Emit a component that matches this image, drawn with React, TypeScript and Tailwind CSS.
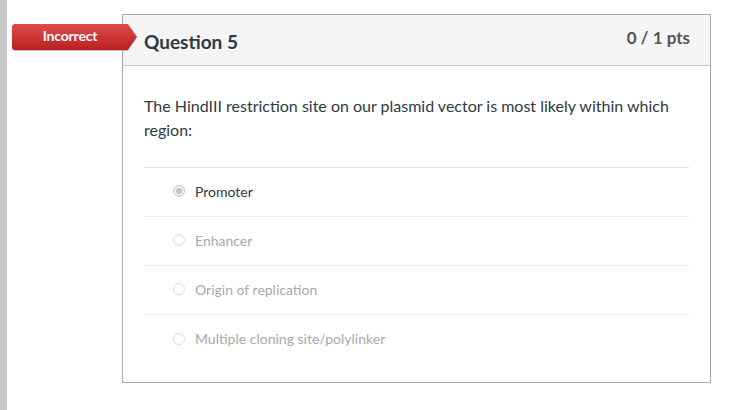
const options = [
  { label: "Promoter", selected: true },
  { label: "Enhancer", selected: false },
  { label: "Origin of replication", selected: false },
  { label: "Multiple cloning site/polylinker", selected: false },
];

const Radio = ({ selected }: { selected: boolean }) => (
  <span
    className={
      "w-[12px] h-[12px] rounded-full border flex items-center justify-center shrink-0 " +
      (selected ? "border-[#c4c4c4] bg-[#f3f3f3]" : "border-[#dedede] bg-white")
    }
  >
    {selected && <span className="w-[6px] h-[6px] rounded-full bg-[#c2c2c2]" />}
  </span>
);

export default function App() {
  return (
    <div className="w-[729px] h-[410px] bg-white flex overflow-hidden" style={{ fontFamily: "Lato, 'Open Sans', sans-serif" }}>
      {/* left rail */}
      <div className="w-[7px] h-full bg-[#c8c8c8] shrink-0" />

      <div className="relative flex-1 pl-[115px] pt-[14px]">
        {/* Incorrect badge */}
        <div className="absolute left-[5px] top-[24px] flex items-center">
          <div className="w-[116px] h-[26px] rounded-l-[3px] bg-gradient-to-b from-[#e24a4a] to-[#b62020] flex items-center justify-center pb-[3px] shadow-[0_1px_1px_rgba(0,0,0,0.25)]">
            <span className="text-white text-[14px] leading-[18px] font-bold tracking-[-0.2px]">Incorrect</span>
          </div>
          <svg width="10" height="26" viewBox="0 0 10 26" className="-ml-px">
            <defs>
              <linearGradient id="bg" x1="0" y1="0" x2="0" y2="1">
                <stop offset="0" stopColor="#e24a4a" />
                <stop offset="1" stopColor="#b62020" />
              </linearGradient>
            </defs>
            <path d="M0 0 L1 0 L10 13 L1 26 L0 26 Z" fill="url(#bg)" />
          </svg>
        </div>

        {/* card */}
        <div className="w-[589px] h-[369px] border border-[#a9a9a9] flex flex-col">
          <div className="h-[51px] bg-[#f5f5f5] border-b border-[#c9c9c9] flex items-start justify-between pl-[21px] pr-[20px]">
            <h2 className="text-[19px] font-bold text-[#2d3b45] mt-[15px] leading-[24px]">Question 5</h2>
            <span className="text-[17px] font-bold text-[#555] mt-[11px] leading-[24px]">0 / 1 pts</span>
          </div>

          <div className="px-[21px] pt-[28px]">
            <p className="text-[16px] leading-[24px] text-[#2d3b45] pr-[10px]">
              The HindIII restriction site on our plasmid vector is most likely within which region:
            </p>
            <div className="mt-[25px] border-t border-[#e3e3e3]">
              {options.map((o, i) => (
                <div
                  key={o.label}
                  className={
                    "h-[49px] flex items-center gap-[10px] pl-[29px] pb-[2px] " +
                    (i < options.length - 1 ? "border-b border-[#ececec]" : "")
                  }
                >
                  <Radio selected={o.selected} />
                  <span className={"text-[14px] " + (o.selected ? "text-[#2d3b45]" : "text-[#a9a9a9]")}>
                    {o.label}
                  </span>
                </div>
              ))}
            </div>
          </div>
        </div>
      </div>
    </div>
  );
}
